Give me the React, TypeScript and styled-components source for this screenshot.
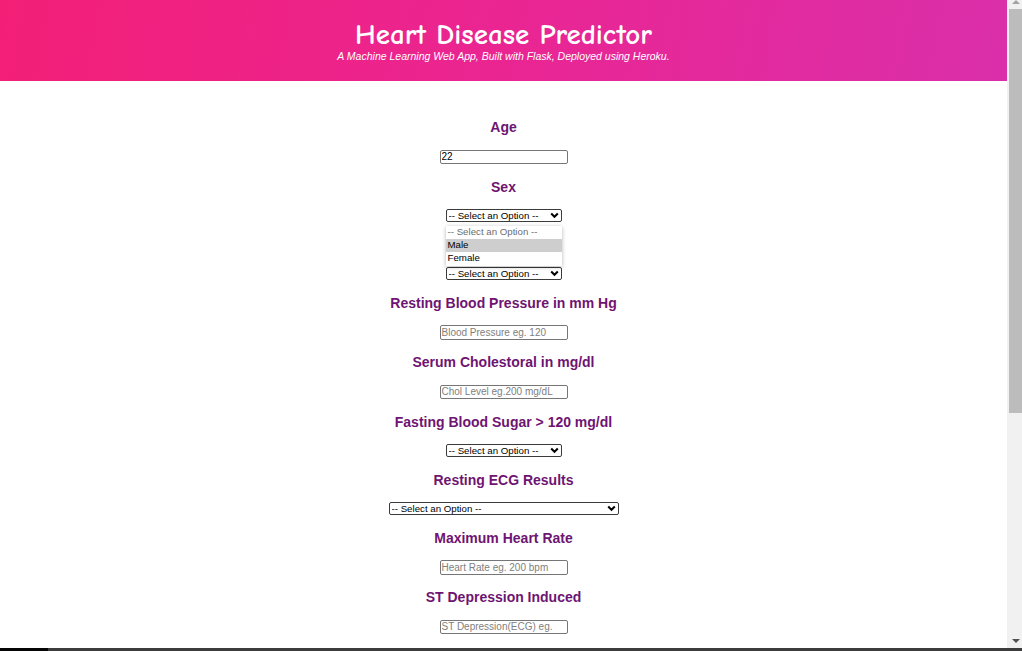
import React from "react";
import styled, { createGlobalStyle } from "styled-components";

const GlobalStyle = createGlobalStyle`
  html, body {
    margin: 0;
    padding: 0;
    background: #ffffff;
    font-family: "Liberation Sans", Arial, sans-serif;
    overflow: hidden;
  }
`;

const Window = styled.div`
  height: 100vh;
  display: flex;
  flex-direction: column;
`;

const Viewport = styled.div`
  flex: 1;
  min-height: 0;
  display: flex;
`;

const Page = styled.main`
  flex: 1;
  min-width: 0;
  overflow: hidden;
`;

const ScrollRail = styled.div`
  width: 15px;
  display: flex;
  flex-direction: column;
  align-items: flex-end;
  background: #f1f1f1;
`;

const Arrow = styled.div<{ $down?: boolean }>`
  height: ${(p) => (p.$down ? "14px" : "9px")};
  width: 13px;
  display: flex;
  justify-content: center;
  align-items: ${(p) => (p.$down ? "center" : "flex-start")};
  &::after {
    content: "";
    border-left: 4px solid transparent;
    border-right: 4px solid transparent;
    ${(p) =>
      p.$down
        ? "border-top: 4px solid #505050;"
        : "border-bottom: 4px solid #a3a3a3;"}
  }
`;

const Thumb = styled.div`
  width: 13px;
  height: 404px;
  background: #bcbcbc;
`;

const Track = styled.div`
  flex: 1;
`;

const BottomEdge = styled.div`
  height: 3px;
  background: linear-gradient(90deg, #050505 0 48px, #3c3c3c 48px);
`;

const Header = styled.header`
  height: 81px;
  background: linear-gradient(100deg, #f31f77 0%, #ea2592 50%, #da2faa 100%);
  display: flex;
  flex-direction: column;
  align-items: center;
  justify-content: center;
  color: #ffffff;
`;

const Title = styled.h1`
  margin: 0;
  font-family: "Comic Sans MS", "Comic Neue", "DejaVu Sans", sans-serif;
  font-size: 29px;
  font-weight: bold;
  line-height: 30px;
  margin-top: 7px;
`;

const Subtitle = styled.p`
  margin: 0;
  font-family: "Liberation Sans", Arial, sans-serif;
  font-style: italic;
  font-size: 10.5px;
  line-height: 12px;
  margin-bottom: 7px;
`;

const Form = styled.form`
  display: flex;
  flex-direction: column;
  align-items: center;
  gap: 14.5px;
  padding: 38px 0 60px;
`;

const Label = styled.label`
  display: block;
  font-size: 14px;
  font-weight: bold;
  line-height: 16px;
  color: #6e1472;
  text-align: center;
`;

const TextInput = styled.input`
  box-sizing: border-box;
  width: 128px;
  height: 14.5px;
  padding: 0 1px;
  border: 1px solid #767676;
  border-radius: 2px;
  font-family: "Liberation Sans", Arial, sans-serif;
  font-size: 10px;
  color: #000;
  &::placeholder {
    color: #808080;
  }
`;

const SelectWrap = styled.div`
  position: relative;
  display: inline-flex;
`;

const Select = styled.select<{ $width: number }>`
  appearance: none;
  box-sizing: border-box;
  width: ${(p) => p.$width}px;
  height: 13px;
  padding: 0 0 0 2px;
  border: 1px solid #3b3b3b;
  border-radius: 2px;
  background: #ffffff;
  font-family: "Liberation Sans", Arial, sans-serif;
  font-size: 9.7px;
  line-height: 11px;
  color: #000;
`;

const Chevron = styled.svg`
  position: absolute;
  right: 3px;
  top: 3px;
  width: 9px;
  height: 7px;
  pointer-events: none;
`;

const OptionList = styled.ul`
  position: absolute;
  top: 17px;
  left: 0;
  width: 116px;
  margin: 0;
  padding: 0 0 1px;
  list-style: none;
  background: #ffffff;
  box-shadow: 0 1px 4px rgba(0, 0, 0, 0.3);
  z-index: 2;
`;

const OptionItem = styled.li<{ $active?: boolean; $muted?: boolean }>`
  height: 13px;
  padding-left: 2px;
  font-size: 9.7px;
  line-height: 12px;
  color: ${(p) => (p.$muted ? "#6d6d6d" : "#000")};
  background: ${(p) => (p.$active ? "#cecece" : "transparent")};
`;

const Field = styled.div`
  display: contents;
`;

const PredictButton = styled.button`
  margin-top: 10px;
  width: 128px;
  height: 24px;
  border: none;
  border-radius: 3px;
  background: linear-gradient(100deg, #f31f77, #da2faa);
  color: #fff;
  font-family: "Liberation Sans", Arial, sans-serif;
  font-size: 12px;
  font-weight: bold;
`;

const PLACEHOLDER = "-- Select an Option --";

function Dropdown({ width = 116, open = false, options = [] as string[] }) {
  return (
    <SelectWrap>
      <Select $width={width} defaultValue="">
        <option value="">{PLACEHOLDER}</option>
        {options.map((o) => (
          <option key={o}>{o}</option>
        ))}
      </Select>
      <Chevron viewBox="0 0 9 7">
        <path d="M1.2 1.5 L4.5 4.8 L7.8 1.5" fill="none" stroke="#000" strokeWidth="2" />
      </Chevron>
      {open && (
        <OptionList>
          <OptionItem $muted>{PLACEHOLDER}</OptionItem>
          {options.map((o, i) => (
            <OptionItem key={o} $active={i === 0}>
              {o}
            </OptionItem>
          ))}
        </OptionList>
      )}
    </SelectWrap>
  );
}

export default function App() {
  return (
    <Window>
      <GlobalStyle />
      <Viewport>
        <Page>
          <Header>
            <Title>Heart Disease Predictor</Title>
            <Subtitle>A Machine Learning Web App, Built with Flask, Deployed using Heroku.</Subtitle>
          </Header>
          <Form>
            <Field>
              <Label>Age</Label>
              <TextInput defaultValue="22" />
            </Field>
            <Field>
              <Label>Sex</Label>
              <Dropdown open options={["Male", "Female"]} />
            </Field>
            <Field>
              <Label>Chest Pain Type</Label>
              <Dropdown options={["Typical Angina", "Atypical Angina", "Non-anginal Pain", "Asymptomatic"]} />
            </Field>
            <Field>
              <Label>Resting Blood Pressure in mm Hg</Label>
              <TextInput placeholder="Blood Pressure eg. 120" />
            </Field>
            <Field>
              <Label>Serum Cholestoral in mg/dl</Label>
              <TextInput placeholder="Chol Level eg.200 mg/dL" />
            </Field>
            <Field>
              <Label>Fasting Blood Sugar &gt; 120 mg/dl</Label>
              <Dropdown options={["Yes", "No"]} />
            </Field>
            <Field>
              <Label>Resting ECG Results</Label>
              <Dropdown width={230} options={["Normal", "ST-T Wave Abnormality", "Left Ventricular Hypertrophy"]} />
            </Field>
            <Field>
              <Label>Maximum Heart Rate</Label>
              <TextInput placeholder="Heart Rate eg. 200 bpm" />
            </Field>
            <Field>
              <Label>ST Depression Induced</Label>
              <TextInput placeholder="ST Depression(ECG) eg." />
            </Field>
            <Field>
              <Label>Exercise Induced Angina</Label>
              <Dropdown options={["Yes", "No"]} />
            </Field>
            <Field>
              <Label>Slope of the Peak Exercise ST Segment</Label>
              <Dropdown options={["Upsloping", "Flat", "Downsloping"]} />
            </Field>
            <Field>
              <Label>Number of Major Vessels</Label>
              <Dropdown options={["0", "1", "2", "3"]} />
            </Field>
            <Field>
              <Label>Thalassemia</Label>
              <Dropdown options={["Normal", "Fixed Defect", "Reversible Defect"]} />
            </Field>
            <PredictButton type="button">Predict</PredictButton>
          </Form>
        </Page>
        <ScrollRail>
          <Arrow />
          <Thumb />
          <Track />
          <Arrow $down />
        </ScrollRail>
      </Viewport>
      <BottomEdge />
    </Window>
  );
}
